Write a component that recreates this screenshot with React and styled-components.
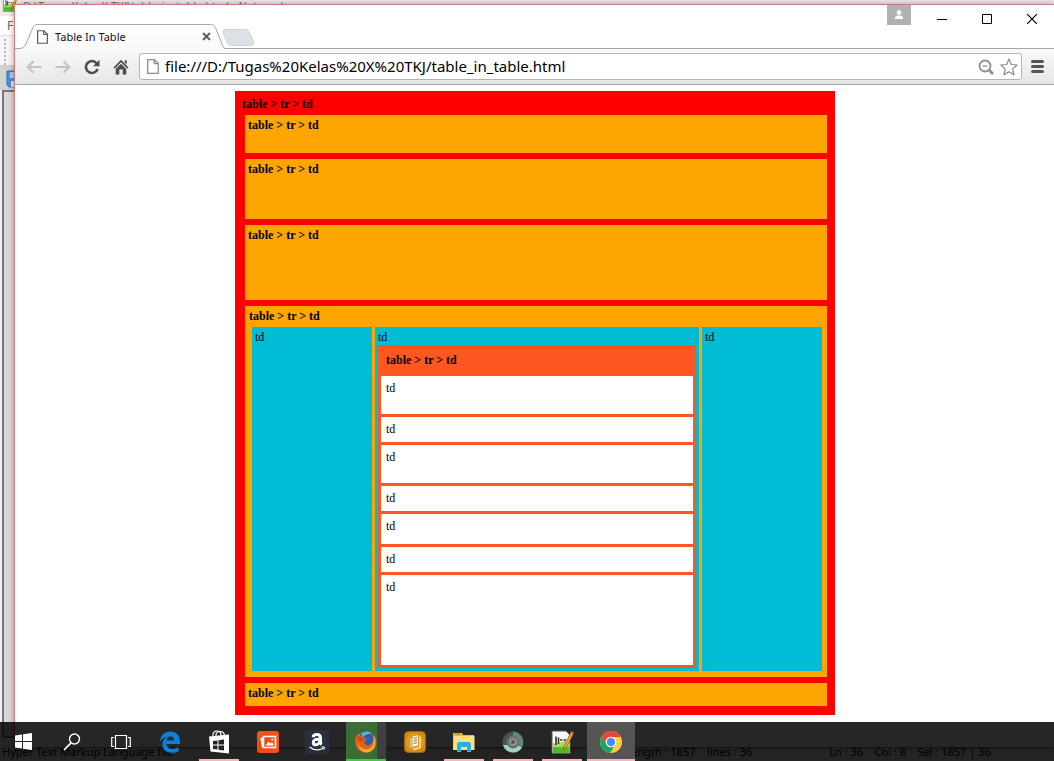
import React, { Fragment } from 'react';
import styled, { createGlobalStyle } from 'styled-components';

const App = () => {
  return (
    <Fragment>
      <GlobalStyle />
      <Desktop>
        <Editor />
        <BrowserWindow>
          <TitleBar />
          <Toolbar />
          <Viewport>
            <NestedTables />
          </Viewport>
        </BrowserWindow>
        <Taskbar />
      </Desktop>
    </Fragment>
  );
};

export default App;

const Editor = () => (
  <EditorWindow>
    <EditorTitle>
      <NotepadIcon size={16} />
      <span>D:\Tugas Kelas X TKJ\table_in_table.html - Notepad++</span>
    </EditorTitle>
    <EditorMenu>File</EditorMenu>
    <EditorTools>
      <Grip />
    </EditorTools>
    <EditorTabs>
      <svg width='18' height='18' viewBox='0 0 18 18'>
        <path d='M1 1h16v16H3l-2-2z' fill='#4a90e0' stroke='#2f6fc0' />
        <path d='M4 2h10v6H4z' fill='#a8d0f8' />
        <path d='M5 11h8v6H5z' fill='#d8e8f8' />
      </svg>
    </EditorTabs>
    <EditorArea />
    <StatusBar>
      <StatusCell grow={628}>Hyper Text Markup Language file</StatusCell>
      <StatusCell grow={200}>length : 1857&nbsp;&nbsp;&nbsp; lines : 36</StatusCell>
      <StatusCell grow={226}>
        Ln : 36&nbsp;&nbsp;&nbsp; Col : 8&nbsp;&nbsp;&nbsp; Sel : 1857 | 36
      </StatusCell>
    </StatusBar>
  </EditorWindow>
);

const TitleBar = () => (
  <TabStrip>
    <Tab>
      <TabShape viewBox='0 0 210 25' preserveAspectRatio='none'>
        <defs>
          <linearGradient id='tabFill' x1='0' y1='0' x2='0' y2='1'>
            <stop offset='0' stopColor='#ffffff' />
            <stop offset='1' stopColor='#f9f9f9' />
          </linearGradient>
        </defs>
        <path
          d='M0 25V24.500C4 24.500 6 23 7 20L14 4C15 1.500 16 .5 19 .5H195C198 .5 199.500 1.500 200.500 4L207 20C208 23 209 24.500 210 24.500V25z'
          fill='url(#tabFill)'
        />
        <path
          d='M0 24.500C4 24.500 6 23 7 20L14 4C15 1.500 16 .5 19 .5H195C198 .5 199.500 1.500 200.500 4L207 20C208 23 209 24.500 210 24.500'
          fill='none'
          stroke='#a6a6a6'
        />
      </TabShape>
      <PageIcon width={11} height={14} color='#555' />
      <TabTitle>Table In Table</TabTitle>
      <TabClose aria-label='Close tab'>
        <svg width='9' height='9' viewBox='0 0 9 9'>
          <path d='M1 1l7 7M8 1l-7 7' stroke='#5a5a5a' strokeWidth='1.800' />
        </svg>
      </TabClose>
    </Tab>
    <NewTab aria-label='New tab'>
      <svg width='33' height='17' viewBox='0 0 33 17'>
        <path
          d='M3 .5H23C25.500 .5 26.500 1.500 27.500 3.500L31.500 13C32.300 15.500 31.500 16.500 29 16.500H10C7.500 16.500 6 15.500 5 13.500L1.200 4C.4 2 .8 .5 3 .5z'
          fill='#dce1e8'
          stroke='#d0d3d8'
        />
      </svg>
    </NewTab>
    <WindowControls>
      <UserBadge aria-label='User'>
        <svg width='10' height='10' viewBox='0 0 10 10' fill='#fff'>
          <circle cx='5' cy='2.500' r='2.300' />
          <path d='M1 9V7.500C1 6 3.500 5.400 5 5.400S9 6 9 7.500V9z' />
        </svg>
      </UserBadge>
      <WindowButton aria-label='Minimize'>
        <svg width='10' height='10' viewBox='0 0 10 10'>
          <path d='M0 5.500h10' stroke='#000' />
        </svg>
      </WindowButton>
      <WindowButton aria-label='Maximize'>
        <svg width='10' height='10' viewBox='0 0 10 10'>
          <path d='M.5 .5h9v9h-9z' fill='none' stroke='#000' />
        </svg>
      </WindowButton>
      <WindowButton aria-label='Close'>
        <svg width='10' height='10' viewBox='0 0 10 10'>
          <path d='M0 0l10 10M10 0L0 10' stroke='#000' strokeWidth='1.200' />
        </svg>
      </WindowButton>
    </WindowControls>
  </TabStrip>
);

const Toolbar = () => (
  <ToolbarRow>
    <ToolButton aria-label='Back'>
      <svg width='16' height='14' viewBox='0 0 16 14'>
        <path d='M7.500 1.200L1.800 7l5.700 5.800M2 7h13.500' fill='none' stroke='#c3c3c3' strokeWidth='2.200' />
      </svg>
    </ToolButton>
    <ToolButton aria-label='Forward'>
      <svg width='16' height='14' viewBox='0 0 16 14'>
        <path d='M8.500 1.200L14.200 7l-5.700 5.800M14 7H.5' fill='none' stroke='#c3c3c3' strokeWidth='2.200' />
      </svg>
    </ToolButton>
    <ToolButton aria-label='Reload'>
      <svg width='16' height='16' viewBox='0 0 16 16'>
        <path d='M12.600 4.200A6 6 0 1 0 13.600 10' fill='none' stroke='#4d4d4d' strokeWidth='2.600' />
        <path d='M15.500 .8V7.200H9z' fill='#4d4d4d' />
      </svg>
    </ToolButton>
    <ToolButton aria-label='Home'>
      <svg width='16' height='16' viewBox='0 0 16 16' fill='#4d4d4d'>
        <path d='M8 .8L15.500 8.500 14.300 9.700 8 3.300 1.700 9.700 .5 8.500z' />
        <path d='M8 4.700L13.300 10V15.500H9.700V10.500H6.300V15.500H2.700V10z' />
        <path d='M11.700 1.200h2v4.300l-2-2z' />
      </svg>
    </ToolButton>
    <Omnibox>
      <PageIcon width={12} height={15} color='#8c8c8c' />
      <Address
        type='text'
        aria-label='Address'
        defaultValue='file:///D:/Tugas%20Kelas%20X%20TKJ/table_in_table.html'
      />
      <OmniButton aria-label='Zoom'>
        <svg width='16' height='16' viewBox='0 0 16 16' fill='none' stroke='#8e8e8e'>
          <circle cx='7' cy='7' r='5.500' strokeWidth='1.800' />
          <path d='M4.500 7h5' strokeWidth='1.300' />
          <path d='M11 11l4 4' strokeWidth='2.600' />
        </svg>
      </OmniButton>
      <OmniButton aria-label='Bookmark'>
        <svg width='18' height='18' viewBox='0 0 18 18'>
          <path
            d='M9 1L11.300 6.500 17.200 7 12.700 10.900 14.100 16.800 9 13.700 3.900 16.800 5.300 10.900 .8 7 6.700 6.500z'
            fill='none'
            stroke='#8a8a8a'
            strokeWidth='1.200'
            strokeLinejoin='round'
          />
        </svg>
      </OmniButton>
    </Omnibox>
    <ToolButton aria-label='Menu'>
      <svg width='13' height='13' viewBox='0 0 13 13'>
        <path d='M1.500 1.500h10M1.500 6.500h10M1.500 11.500h10' stroke='#555' strokeWidth='3' strokeLinecap='round' />
      </svg>
    </ToolButton>
  </ToolbarRow>
);

const PageIcon = ({ width, height, color }) => (
  <svg width={width} height={height} viewBox='0 0 12 15' fill='none' stroke={color}>
    <path d='M.7 .7H7.500L11.300 4.500V14.300H.7z' fill='#fff' strokeWidth='1.300' />
    <path d='M7.300 .8V4.700H11.200' strokeWidth='1.200' />
  </svg>
);

const rowHeights = [25, 38, 25, 38, 25, 30, 25, 90];

const NestedTables = () => (
  <OuterTable>
    <tbody>
      <tr>
        <OuterCell>
          <Label>table &gt; tr &gt; td</Label>
          <BandTable>
            <tbody>
              {[44, 66, 81].map((height) => (
                <tr key={height}>
                  <Band height={height}>
                    <Label>table &gt; tr &gt; td</Label>
                  </Band>
                </tr>
              ))}
              <tr>
                <Band wide>
                  <Label>table &gt; tr &gt; td</Label>
                  <ColumnTable>
                    <tbody>
                      <tr>
                        <Column side>td</Column>
                        <Column>
                          td
                          <RowTable>
                            <tbody>
                              {rowHeights.map((height, i) => (
                                <tr key={i}>
                                  <Row height={height} heading={i === 0}>
                                    {i === 0 ? <Label>table &gt; tr &gt; td</Label> : 'td'}
                                  </Row>
                                </tr>
                              ))}
                            </tbody>
                          </RowTable>
                        </Column>
                        <Column side>td</Column>
                      </tr>
                    </tbody>
                  </ColumnTable>
                </Band>
              </tr>
              <tr>
                <Band height={23} last>
                  <Label>table &gt; tr &gt; td</Label>
                </Band>
              </tr>
            </tbody>
          </BandTable>
        </OuterCell>
      </tr>
    </tbody>
  </OuterTable>
);

const Taskbar = () => (
  <Bar>
    <TaskButton aria-label='Start' first>
      <svg width='17' height='17' viewBox='0 0 17 17' fill='#fff'>
        <path d='M0 2.400L7 1.400V8H0zM8 1.300L17 0V8H8zM0 9H7V15.600L0 14.600zM8 9H17V17L8 15.700z' />
      </svg>
    </TaskButton>
    <TaskButton aria-label='Search'>
      <svg width='18' height='18' viewBox='0 0 18 18' fill='none' stroke='#fff'>
        <circle cx='11.500' cy='6' r='5' strokeWidth='1.400' />
        <path d='M8 9.800L1 17' strokeWidth='1.700' />
      </svg>
    </TaskButton>
    <TaskButton aria-label='Task view'>
      <svg width='20' height='16' viewBox='0 0 20 16' fill='none' stroke='#fff'>
        <path d='M4.500 1.500h11v13h-11z' strokeWidth='1.200' />
        <path d='M3 3.500H.7v9H3M17 3.500h2.300v9H17' strokeWidth='1.200' />
      </svg>
    </TaskButton>
    <TaskButton aria-label='Edge'>
      <svg width='22' height='22' viewBox='0 0 22 22'>
        <path
          d='M1 10.500C1.500 4 6 .5 11.300 .5 17.500 .5 21 5 21 10.500V13H7.500C7.700 16.300 10.500 18 13.800 18 16 18 18 17.300 19.500 16.300V20.300C17.700 21.300 15.500 21.800 13 21.800 7.500 21.800 3.400 18.500 3.400 13.500 3.400 10 5.500 7.300 8.700 5.800 5.500 6 2.500 8 1 10.500zM7.700 9.500H15.200C15.200 7 13.800 5.400 11.600 5.400 9.500 5.400 8 7 7.700 9.500z'
          fill='#0c7fdc'
        />
      </svg>
    </TaskButton>
    <TaskButton aria-label='Store' running>
      <svg width='22' height='24' viewBox='0 0 22 24'>
        <path d='M5 8V5C5 2 7 1 9 1s4 1 4 4v2M8 7V5c0-2 2-3.500 4-3.500S16.500 2.500 16.500 6' fill='none' stroke='#fff' strokeWidth='1.200' />
        <path d='M1 6.500L21 4.500V23.500L2.500 21.500z' fill='#fff' />
        <path d='M5 11L9.500 10.400V14.500H5zM10.500 10.200L16 9.500V14.500h-5.500zM5 15.500H9.500V19.600L5 19.100zM10.500 15.500H16V20.400L10.500 19.700z' fill='#242424' />
      </svg>
    </TaskButton>
    <TaskButton aria-label='Photos'>
      <svg width='22' height='22' viewBox='0 0 22 22'>
        <rect width='22' height='22' rx='3' fill='#f4511e' />
        <path d='M8 0L1 9v12l9 1 10-6z' fill='#e8480f' opacity='.6' />
        <path d='M3.300 7L6 6.300V16L5 16.700z' fill='#fff' />
        <path d='M6.500 5.500h12v11h-12z' fill='none' stroke='#fff' strokeWidth='1.600' />
        <path d='M8.500 14.500l3-4 2 2 1.500-1.500 2 3.500z' fill='#fff' />
        <circle cx='15.300' cy='8.500' r='1' fill='#fff' />
      </svg>
    </TaskButton>
    <TaskButton aria-label='Amazon'>
      <svg width='24' height='24' viewBox='0 0 24 24'>
        <rect width='24' height='24' rx='2' fill='#28303d' />
        <path d='M8 7.200C8.300 5.300 9.800 4.500 12 4.500 14.300 4.500 15.500 5.600 15.500 7.800V12.600C15.500 13.500 15.900 14 16.500 14.700M15.200 9C11.500 9 8.300 9.500 8.300 12.400 8.300 14 9.300 14.800 10.800 14.800 13.300 14.800 14.800 12.500 15 10' fill='none' stroke='#fff' strokeWidth='3' />
        <path d='M4.500 17C9 20.500 14.500 20.500 18.500 18' fill='none' stroke='#fff' strokeWidth='1.200' />
        <path d='M16.500 17H19.500L18.800 19.700' fill='none' stroke='#fff' />
      </svg>
    </TaskButton>
    <TaskButton aria-label='Firefox'>
      <Progress />
      <svg width='22' height='22' viewBox='0 0 22 22'>
        <circle cx='11' cy='11' r='10.500' fill='#f2701d' />
        <path d='M5 3C9-.5 16 0 19 5 20 10 17 14 12.500 15 8 15 6 11 5 8z' fill='#2b62ab' />
        <path d='M6 3C9 0 14 0 17 2.500 13 2.500 10 4 8 6z' fill='#5eb0e0' />
        <path
          d='M1.500 4L4 5.500C6 5 8 5.500 9.500 7L12 8 9.500 10C8.500 13 11 15 14.500 14 18 12.500 19 8.500 17.500 4 20.500 7 21.500 10 21 13 19 19 15.500 21.500 11 21.500 5 21.500 .5 17 .5 11.500.5 8 .8 6 1.500 4z'
          fill='#e8601a'
        />
        <path d='M17.500 4C20 9 19 14.500 15 17.500 10 20 4.500 17 3 12 3 18.500 8 21.300 12 21.300 20 20 23 11 17.500 4z' fill='#fbb034' />
        <path d='M1.500 4L4 6 9 8 7 10.500 3.500 10z' fill='#c8451a' />
      </svg>
    </TaskButton>
    <TaskButton aria-label='Documents'>
      <svg width='22' height='22' viewBox='0 0 22 22'>
        <rect x='.5' y='.5' width='21' height='21' rx='4' fill='#d88a0b' stroke='#94642a' />
        <circle cx='11' cy='11' r='9' fill='#f0a81d' opacity='.6' />
        <path d='M6 7L8 6.300V17.500L6 16.700z' fill='#fff4d8' stroke='#b07310' strokeWidth='.6' />
        <path d='M8 5L14.500 3.700V14.800L8 16.500z' fill='#fff4d8' stroke='#b07310' strokeWidth='.6' />
        <path d='M16 5.500V16.500L9.500 18.300' fill='none' stroke='#fff4d8' strokeWidth='1.200' />
        <path d='M9.500 7.500l3.500-.9M9.500 10l3.500-.9M9.500 12.500l3.500-.9' stroke='#b07310' />
      </svg>
    </TaskButton>
    <TaskButton aria-label='File Explorer' running>
      <svg width='22' height='20' viewBox='0 0 22 20'>
        <path d='M0 2V1h9l1 2h11v15H0z' fill='#e9b83e' />
        <path d='M1 4h20.500v14H0z' fill='#ffe08a' />
        <path d='M2 1.500h5v1H2z' fill='#4cae4f' />
        <path d='M4 20V11.500L5.500 10h11l1.500 1.500V20h-4V15H8v5z' fill='#1db5f1' />
      </svg>
    </TaskButton>
    <TaskButton aria-label='Chromium' running>
      <svg width='22' height='22' viewBox='0 0 22 22'>
        <circle cx='11' cy='11' r='10.500' fill='#48534f' />
        <path d='M11 .5A10.500 10.500 0 0 1 20 16L14 12 11 6z' fill='#5d8a7d' />
        <path d='M1 14A10.500 10.500 0 0 0 20 16.500L14 13 8 14z' fill='#a3d4c4' />
        <circle cx='11' cy='11' r='6.500' fill='#6b706e' />
        <circle cx='11' cy='11' r='3.800' fill='#939695' />
        <circle cx='11' cy='11' r='2' fill='#555' />
      </svg>
    </TaskButton>
    <TaskButton aria-label='Notepad++' running>
      <NotepadIcon size={24} />
    </TaskButton>
    <TaskButton aria-label='Chrome' running active>
      <svg width='22' height='22' viewBox='0 0 22 22'>
        <circle cx='11' cy='11' r='11' fill='#ffd041' />
        <path d='M1.500 5.500A11 11 0 0 1 20.800 6H11A5 5 0 0 0 6.600 13.500z' fill='#dd4b3e' />
        <path d='M1.500 5.500A11 11 0 0 0 10.200 22L15.400 13.500A5 5 0 0 1 6.600 13.500z' fill='#1da462' />
        <circle cx='11' cy='11' r='5.300' fill='#fff' />
        <circle cx='11' cy='11' r='4.200' fill='#4c8bf5' />
      </svg>
    </TaskButton>
  </Bar>
);

const NotepadIcon = ({ size }) => (
  <svg width={size} height={size} viewBox='0 0 24 24'>
    <path d='M2 1H16L20 5V23.500H2z' fill='#f8f8f8' stroke='#555' />
    <path d='M3 13C9 15 13 10 19.500 11V23H3z' fill='#a9dc55' />
    <path d='M3 17H19.500V23H3z' fill='#55b82a' />
    <path d='M6 6.500V15M8.500 7.500V14' stroke='#333' strokeWidth='1.600' />
    <path d='M10 10h2.500M13.500 10H16' stroke='#333' strokeWidth='1.400' />
    <path d='M21 2L23.500 3.500 16 18 13.500 20 14 16.500z' fill='#f2a922' stroke='#7a5320' strokeWidth='.7' />
    <path d='M21 1l3 1.500-.8 1.500-3-1.500z' fill='#c35b4d' />
  </svg>
);

const GlobalStyle = createGlobalStyle`
  * {
    box-sizing: border-box;
  }

  body {
    margin: 0;
    background: #f0f0f0;
    font-family: 'Noto Sans', 'Open Sans', sans-serif;
    font-size: 11px;
  }

  button {
    display: flex;
    align-items: center;
    justify-content: center;
    margin: 0;
    padding: 0;
    border: 0;
    background: none;
  }

  svg {
    display: block;
    flex: none;
  }
`;

const Desktop = styled.div`
  position: relative;
  min-height: 100vh;
  padding: 4px 0 13px 14px;
  display: flex;
  overflow: hidden;
`;

/* the editor stays behind the browser window */
const EditorWindow = styled.div`
  position: absolute;
  inset: 0;
  display: flex;
  flex-direction: column;
  background: #f0f0f0;
  white-space: nowrap;
`;

const EditorTitle = styled.div`
  display: flex;
  align-items: flex-start;
  gap: 5px;
  height: 16px;
  padding-left: 2px;
  background: #ececec;
  color: #777;
  line-height: 12px;

  svg {
    margin-top: -4px;
  }
`;

const EditorMenu = styled.div`
  height: 19px;
  padding-left: 7px;
  background: #fff;
  color: #666;
  font-size: 12px;
  line-height: 20px;
`;

const EditorTools = styled.div`
  height: 30px;
  padding: 3px 4px;
  border-top: 1px solid #e2e2e2;
  background: #f6f6f6;
`;

const Grip = styled.div`
  height: 26px;
  border-left: 2px dotted #b5b5b5;
`;

const EditorTabs = styled.div`
  height: 25px;
  padding: 4px 6px;
  border-top: 1px solid #ccc;
  background: #d2d2d2;
`;

const EditorArea = styled.div`
  flex: 1;
  margin-left: 2px;
  border: 2px solid #777;
  border-right: 0;
  background: #d9d9d9;
`;

const StatusBar = styled.div`
  display: flex;
  height: 23px;
  padding-top: 5px;
  color: #000;
  line-height: 17px;
`;

const StatusCell = styled.div`
  flex: ${(props) => props.grow} 1 0;
  padding-left: 2px;
`;

const BrowserWindow = styled.div`
  position: relative;
  flex: 1;
  min-width: 0;
  display: flex;
  flex-direction: column;
  border: 1px solid #d97777;
  border-right: 0;
  background: #fff;
  box-shadow: 0 0 6px rgba(0, 0, 0, 0.35);
`;

const TabStrip = styled.div`
  display: flex;
  align-items: flex-end;
  height: 44px;
  padding-left: 4px;
  box-shadow: inset 0 -1px #a6a6a6;
`;

const Tab = styled.div`
  position: relative;
  display: flex;
  align-items: center;
  width: 206px;
  height: 25px;
  padding: 0 13px 0 18px;
`;

const TabShape = styled.svg`
  position: absolute;
  left: 0;
  top: 0;
  width: 100%;
  height: 100%;

  & ~ * {
    position: relative;
  }
`;

const TabTitle = styled.span`
  flex: 1;
  margin-left: 7px;
  color: #111;
`;

const TabClose = styled.button`
  width: 12px;
  height: 16px;
`;

const NewTab = styled.button`
  width: 33px;
  height: 17px;
  margin: 0 0 3px -3px;
`;

const WindowControls = styled.div`
  display: flex;
  align-self: flex-start;
  margin-left: auto;
`;

const UserBadge = styled.button`
  width: 24px;
  height: 20px;
  margin-right: 8px;
  background: #b1b1b1;
`;

const WindowButton = styled.button`
  width: 45px;
  height: 28px;
`;

const ToolbarRow = styled.div`
  display: flex;
  align-items: center;
  height: 36px;
  padding: 0 2px 0 4px;
  border-bottom: 1px solid #a9a9a9;
  background: linear-gradient(#f9f9f9, #e6e6e6);
`;

const ToolButton = styled.button`
  width: 29px;
  height: 28px;
`;

const Omnibox = styled.div`
  flex: 1;
  display: flex;
  align-items: center;
  height: 27px;
  margin: 0 1px 0 4px;
  padding: 0 1px 0 7px;
  border: 1px solid #b4b4b4;
  border-radius: 3px;
  background: #fff;
`;

const Address = styled.input`
  flex: 1;
  min-width: 0;
  height: 20px;
  margin: 0 0 2px 6px;
  padding: 0;
  border: 0;
  outline: 0;
  background: none;
  color: #000;
  font-family: 'Noto Sans', 'Open Sans', sans-serif;
  font-size: 15px;
`;

const OmniButton = styled.button`
  width: 23px;
  height: 22px;
`;

const Viewport = styled.div`
  flex: 1;
  padding: 6px 0 31px 1px;
  color: #000;
`;

const BaseTable = styled.table`
  width: 100%;
  border-spacing: 0;
  font-family: 'Liberation Serif', serif;
  font-size: 12px;
  line-height: 12px;

  td {
    vertical-align: top;
  }
`;

const OuterTable = styled(BaseTable)`
  width: 600px;
  max-width: 100%;
  margin: 0 auto;
  background: #ff0000;
`;

const OuterCell = styled.td`
  padding: 7px 8px 9px 7px;
`;

const Label = styled.b`
  display: block;
`;

const BandTable = styled(BaseTable)`
  width: auto;
  min-width: calc(100% - 3px);
  margin: 5px 0 0 3px;
`;

const Band = styled.td`
  height: ${(props) => (props.height ? `${props.height}px` : 'auto')};
  padding: ${(props) => (props.wide ? '4px 2px 3px 4px' : '4px 3px 0')};
  border-bottom: ${(props) => (props.last ? '0' : '6px solid #ff0000')};
  background: #ffa500;
`;

const ColumnTable = styled(BaseTable)`
  margin-top: 2px;
  border-spacing: 3px;
`;

const Column = styled.td`
  width: ${(props) => (props.side ? '120px' : 'auto')};
  padding: 4px 3px 3px;
  background: #00bcd4;
`;

const RowTable = styled(BaseTable)`
  margin-top: 2px;
  border-spacing: 3px;
  background: #ff5722;
`;

const Row = styled.td`
  height: ${(props) => props.height}px;
  padding: 6px 5px;
  background: ${(props) => (props.heading ? '#ff5722' : '#fff')};
`;

const Bar = styled.div`
  position: fixed;
  left: 0;
  right: 0;
  bottom: 0;
  display: flex;
  height: 39px;
  background: rgba(0, 0, 0, 0.85);
`;

const TaskButton = styled.button`
  position: relative;
  width: ${(props) => (props.first ? '47px' : '48px')};
  margin-right: 1px;
  background: ${(props) => (props.active ? '#555' : 'none')};

  svg {
    position: relative;
  }

  &::after {
    content: '';
    display: ${(props) => (props.running ? 'block' : 'none')};
    position: absolute;
    left: ${(props) => (props.active ? '0' : '4px')};
    right: ${(props) => (props.active ? '0' : '4px')};
    bottom: 0;
    height: 2px;
    background: #f7b6bd;
  }
`;

const Progress = styled.span`
  position: absolute;
  inset: 0 4px;
  border-bottom: 2px solid #4fc04a;
  background: linear-gradient(to right, #3b6e37 31px, #404040 31px);
`;
